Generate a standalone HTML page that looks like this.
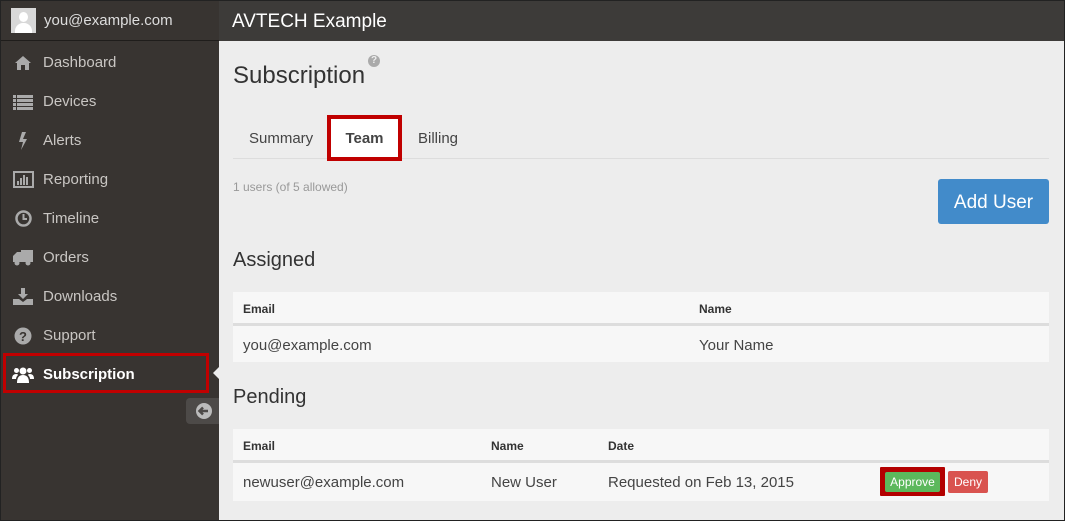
<!DOCTYPE html>
<html><head><meta charset="utf-8"><style>
*{box-sizing:border-box;margin:0;padding:0}
body{width:1065px;height:521px;overflow:hidden;font-family:"Liberation Sans",sans-serif;background:#ededed;position:relative}
#frame{position:absolute;left:0;top:0;width:1065px;height:521px;border:1px solid #222;z-index:10;pointer-events:none}
#side{position:absolute;left:0;top:0;width:219px;height:521px;background:#383431}
#user{height:41px;border-bottom:1px solid #1f1d1b;display:flex;align-items:center;padding-left:11px;color:#ddd;font-size:15px}
#user .av{width:25px;height:25px;background:#d8d8d8;margin-right:8px;position:relative;overflow:hidden}
.item{height:39px;display:flex;align-items:center;color:#c9c6c3;font-size:15px;position:relative;top:2px}
.item .ic{width:22px;margin-left:12px;margin-right:9px;display:flex;justify-content:center;color:#aaa}
.sel{color:#fff;font-weight:bold}
#selbox{position:absolute;left:3px;top:353px;width:206px;height:40px;border:3px solid #c00000}
#arrow{position:absolute;left:213px;top:366px;width:0;height:0;border-top:7px solid transparent;border-bottom:7px solid transparent;border-right:7px solid #ededed}
#coll{position:absolute;left:186px;top:398px;width:33px;height:26px;background:#4d4a48;border-radius:4px 0 0 4px}
#head{position:absolute;left:219px;top:0;width:846px;height:41px;background:#3d3b39;color:#fff;font-size:19px;padding:11px 0 0 13px}
#main{position:absolute;left:219px;top:41px;width:846px;height:480px}
h1{position:absolute;left:14px;top:21px;font-weight:normal;font-size:24px;color:#333}
.q{position:absolute;left:149px;top:14px;width:12px;height:12px;border-radius:50%;background:#aaa;color:#eee;font-size:10px;font-weight:bold;text-align:center;line-height:12px}
.tabs{position:absolute;left:14px;top:76px;width:816px;height:42px;border-bottom:1px solid #ddd}
.tab{position:absolute;top:13px;font-size:15px;color:#444}
#team{position:absolute;left:108px;top:74px;width:75px;height:46px;border:4px solid #c00000;background:#fff;font-weight:bold;font-size:15px;color:#444;text-align:center;padding-top:11px}
.small{position:absolute;left:14px;top:139px;font-size:12px;color:#999}
#add{position:absolute;left:719px;top:138px;width:111px;height:45px;background:#428bca;border-radius:3px;color:#fff;font-size:19px;text-align:center;line-height:47px}
h2{position:absolute;left:14px;font-weight:normal;font-size:20px;color:#333}
.tbl{position:absolute;left:14px;width:816px;background:#f7f7f7}
.th{height:34px;border-bottom:3px solid #ddd;position:relative;font-weight:bold;font-size:12px;color:#333}
.tr{height:36px;position:relative;font-size:15px;color:#444}
.th span{position:absolute;top:9px}
.tr span{position:absolute;top:11px}
.btn{position:absolute;top:10px;height:20px;font-size:12px;color:#fff;border-radius:2px;text-align:center;line-height:20px}
</style></head><body>
<div id="side">
 <div id="user"><div class="av"><div style="position:absolute;left:8px;top:4px;width:9px;height:10px;border-radius:50%;background:#fff"></div><div style="position:absolute;left:4px;top:15px;width:17px;height:14px;border-radius:8px 8px 0 0;background:#fff"></div></div>you@example.com</div>
 <div class="item"><span class="ic">
<svg width="18" height="16" viewBox="0 0 18 16"><path d="M9 1 L1 8 H3 V15 H7 V10 H11 V15 H15 V8 H17 Z" fill="#aaa"/></svg></span>Dashboard</div>
 <div class="item"><span class="ic"><svg width="20" height="16"><g fill="#aaa"><rect x="0" y="1" width="3" height="3"/><rect x="4" y="1" width="16" height="3"/><rect x="0" y="5" width="3" height="3"/><rect x="4" y="5" width="16" height="3"/><rect x="0" y="9" width="3" height="3"/><rect x="4" y="9" width="16" height="3"/><rect x="0" y="13" width="3" height="3"/><rect x="4" y="13" width="16" height="3"/></g></svg></span>Devices</div>
 <div class="item"><span class="ic"><svg width="10" height="18"><path d="M4 0 L1 10 H5 L3 18 L9 7 H5 L8 0Z" fill="#aaa"/></svg></span>Alerts</div>
 <div class="item"><span class="ic"><svg width="21" height="17"><rect x="1" y="1" width="19" height="15" fill="none" stroke="#aaa" stroke-width="2"/><g fill="#aaa"><rect x="4" y="10" width="2" height="4"/><rect x="7" y="7" width="2" height="7"/><rect x="10" y="4" width="2" height="10"/><rect x="13" y="6" width="2" height="8"/></g></svg></span>Reporting</div>
 <div class="item"><span class="ic"><svg width="17" height="17"><circle cx="8.5" cy="8.5" r="7" fill="none" stroke="#aaa" stroke-width="2.5"/><path d="M8.5 4V9H12" stroke="#aaa" stroke-width="2" fill="none"/></svg></span>Timeline</div>
 <div class="item"><span class="ic"><svg width="20" height="16"><path d="M0 11 V6 L4 2 H8 V0 H20 V12 H0Z" fill="#aaa"/><circle cx="4" cy="13" r="2.5" fill="#aaa"/><circle cx="15" cy="13" r="2.5" fill="#aaa"/></svg></span>Orders</div>
 <div class="item"><span class="ic"><svg width="20" height="17"><path d="M8 0H12V6H15L10 11L5 6H8Z" fill="#aaa"/><path d="M0 11H6L10 14L14 11H20V17H0Z" fill="#aaa"/></svg></span>Downloads</div>
 <div class="item"><span class="ic"><svg width="18" height="18"><circle cx="9" cy="9" r="8.5" fill="#aaa"/><text x="9" y="14" text-anchor="middle" font-size="13" font-weight="bold" fill="#383431" font-family="Liberation Sans">?</text></svg></span>Support</div>
 <div class="item sel"><span class="ic"><svg width="22" height="18"><g fill="#fff"><circle cx="11" cy="5" r="3.5"/><circle cx="4.5" cy="4.5" r="2.5"/><circle cx="17.5" cy="4.5" r="2.5"/><path d="M5 17 Q5 9 11 9 Q17 9 17 17Z"/><path d="M0 13 Q0 8 4 8 Q6 8 6 9 Q4 11 4 13Z"/><path d="M22 13 Q22 8 18 8 Q16 8 16 9 Q18 11 18 13Z"/></g></svg></span>Subscription</div>
 <div id="selbox"></div>
 <div id="arrow"></div>
 <div id="coll"><svg width="33" height="26"><circle cx="18" cy="13" r="8" fill="#bbb"/><path d="M22 13H14M17 9.5L13.5 13L17 16.5" stroke="#4d4a48" stroke-width="2.5" fill="none"/></svg></div>
</div>
<div id="head">AVTECH Example</div>
<div id="main">
 <h1>Subscription</h1><div class="q">?</div>
 <div class="tabs"><span class="tab" style="left:16px">Summary</span><span class="tab" style="left:185px">Billing</span></div>
 <div id="team">Team</div>
 <div class="small">1 users (of 5 allowed)</div>
 <div id="add">Add User</div>
 <h2 style="top:208px">Assigned</h2>
 <div class="tbl" style="top:251px">
  <div class="th"><span style="left:10px;top:10px">Email</span><span style="left:466px;top:10px">Name</span></div>
  <div class="tr"><span style="left:10px">you@example.com</span><span style="left:466px">Your Name</span></div>
 </div>
 <h2 style="top:345px">Pending</h2>
 <div class="tbl" style="top:388px">
  <div class="th"><span style="left:10px;top:10px">Email</span><span style="left:258px;top:10px">Name</span><span style="left:375px;top:10px">Date</span></div>
  <div class="tr" style="height:38px"><span style="left:10px">newuser@example.com</span><span style="left:258px">New User</span><span style="left:375px">Requested on Feb 13, 2015</span>
   <div style="position:absolute;left:647px;top:4px;width:65px;height:29px;background:#b30000;border-radius:1px"></div>
   <div class="btn" style="left:652px;top:9px;width:55px;background:#5cb85c">Approve</div>
   <div class="btn" style="left:715px;top:8px;width:40px;height:22px;line-height:22px;background:#d9534f">Deny</div>
  </div>
 </div>
</div>
<div id="frame"></div>
</body></html>
